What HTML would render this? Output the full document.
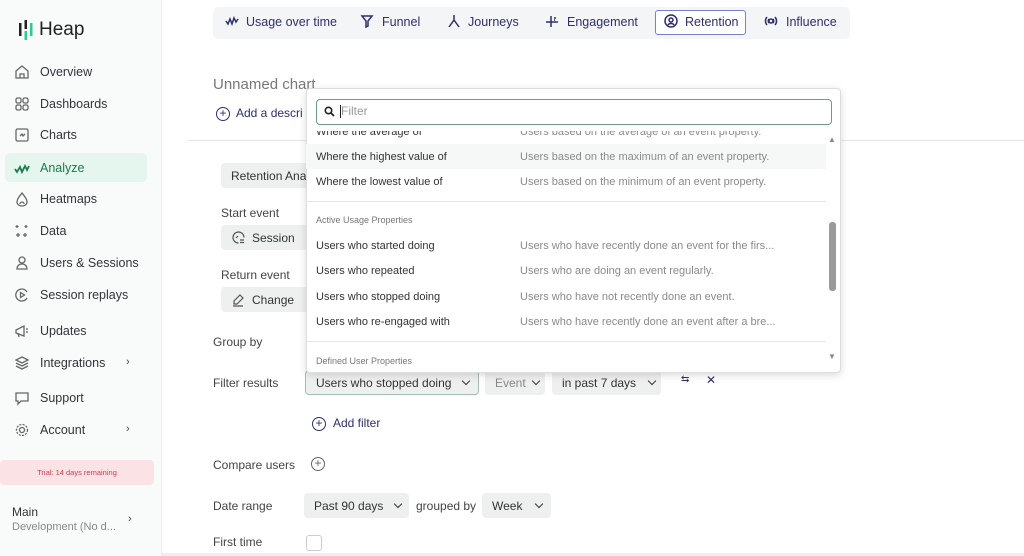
<!DOCTYPE html>
<html><head><meta charset="utf-8"><style>
*{box-sizing:border-box;margin:0;padding:0}
body{width:1024px;height:556px;overflow:hidden;font-family:"Liberation Sans",sans-serif;background:#fff;position:relative;color:#2f2f37}
.a{position:absolute;white-space:nowrap}
#sb{position:absolute;left:0;top:0;width:162px;height:556px;background:#f9fbfb;border-right:1px solid #eceeee}
.nav{position:absolute;left:14px;font-size:12.5px;color:#33333a;display:flex;align-items:center}
.nav svg{width:16px;height:16px;margin-right:10px;stroke:#666;fill:none;stroke-width:1.3}
.chev{position:absolute;left:126px;font-size:11px;color:#444}
.pill{position:absolute;background:#eeefef;border-radius:4px;font-size:12px;color:#333;display:flex;align-items:center;padding-left:10px}
.lbl{font-size:12px;color:#444}
.row{position:absolute;left:306px;width:520px;height:25px;font-size:11px;display:flex;align-items:center}
.row .l{position:absolute;left:10px;color:#333}
.row .r{position:absolute;left:214px;color:#8a8a8e}
.hd{position:absolute;left:316px;font-size:9px;color:#777}
.tab{position:absolute;top:15px;font-size:12.5px;color:#2d2f6e}
.ti{position:absolute;top:14px}
.ti svg{width:14px;height:14px;fill:none;stroke:#2d2f6e;stroke-width:1.5}
.cv{display:inline-block;width:6px;height:6px;border-right:1.6px solid #333;border-bottom:1.6px solid #333;transform:rotate(45deg);margin-top:-4px}
</style></head><body>
<div id="sb">
 <div class="a" style="left:18px;top:18px;">
  <svg width="16" height="24" viewBox="0 0 16 24"><rect x="1" y="5" width="2.5" height="13" fill="#222"/><rect x="6.5" y="2" width="2.5" height="9" fill="#222"/><rect x="6.5" y="13" width="2.5" height="9" fill="#2ecc87"/><rect x="12" y="5" width="2.5" height="13" fill="#2ecc87"/></svg>
 </div>
 <div class="a" style="left:39px;top:19px;font-size:19px;color:#222">Heap</div>
 <div class="nav" style="top:64px"><svg viewBox="0 0 16 16"><path d="M2 7l6-5 6 5v7H2z M6 14v-4h4v4"/></svg>Overview</div>
 <div class="nav" style="top:96px"><svg viewBox="0 0 16 16"><rect x="2" y="2" width="5" height="5" rx="1.5"/><rect x="9" y="2" width="5" height="5" rx="1.5"/><rect x="2" y="9" width="5" height="5" rx="1.5"/><rect x="9" y="9" width="5" height="5" rx="1.5"/></svg>Dashboards</div>
 <div class="nav" style="top:127px"><svg viewBox="0 0 16 16"><rect x="2" y="2" width="12" height="12" rx="1.5"/><path d="M6 9l2-2 1 2 2-2"/></svg>Charts</div>
 <div class="a" style="left:5px;top:153px;width:142px;height:29px;background:#e5f6ee;border-radius:5px"></div>
 <div class="nav" style="top:160px;color:#1f7a4d"><svg viewBox="0 0 16 16" style="stroke:#1f7a4d;stroke-width:1.8"><path d="M1 9l2 3 3-5 2 5 3-6 2 4 2-4"/></svg>Analyze</div>
 <div class="nav" style="top:191px"><svg viewBox="0 0 16 16"><path d="M8 2c-3 4-5 6-5 9a5 4 0 0 0 10 0c0-3-2-5-5-9z M6 13a2 2 0 0 1 4 0"/></svg>Heatmaps</div>
 <div class="nav" style="top:223px"><svg viewBox="0 0 16 16"><path d="M3 2v3M1.5 3.5h3M12 2v3M10.5 3.5h3M4 10v4M2 12h4M11 10v4M9 12h4"/></svg>Data</div>
 <div class="nav" style="top:255px"><svg viewBox="0 0 16 16"><circle cx="8" cy="5" r="3"/><path d="M3 14c0-3 2-5 5-5s5 2 5 5z"/></svg>Users &amp; Sessions</div>
 <div class="nav" style="top:287px"><svg viewBox="0 0 16 16"><path d="M13 5a6 6 0 1 0 0 6"/><path d="M6.5 5.5v5l4-2.5z"/></svg>Session replays</div>
 <div class="nav" style="top:323px"><svg viewBox="0 0 16 16"><path d="M2 7l8-4v10L2 10z M4 10l1 4M12 6h2M12 9h2"/></svg>Updates</div>
 <div class="nav" style="top:355px"><svg viewBox="0 0 16 16"><path d="M8 2l6 3-6 3-6-3z M2 8l6 3 6-3M2 11l6 3 6-3"/></svg>Integrations</div>
 <div class="chev" style="top:356px">›</div>
 <div class="nav" style="top:390px"><svg viewBox="0 0 16 16"><path d="M2 3h12v8H7l-3 3v-3H2z"/></svg>Support</div>
 <div class="nav" style="top:422px"><svg viewBox="0 0 16 16"><circle cx="8" cy="8" r="2.5"/><circle cx="8" cy="8" r="5.5" stroke-dasharray="2 1.3"/></svg>Account</div>
 <div class="chev" style="top:423px">›</div>
 <div class="a" style="left:0;top:460px;width:154px;height:25px;background:#fbe3e5;border-radius:4px;font-size:7.5px;color:#d23a4c;text-align:center;line-height:25px">Trial: 14 days remaining</div>
 <div class="a" style="left:12px;top:505px;font-size:12px;color:#333">Main</div>
 <div class="a" style="left:12px;top:521px;font-size:11px;color:#888">Development (No d...</div>
 <div class="chev" style="top:513px;left:128px">›</div>
</div>

<div class="a" style="left:213px;top:7px;width:637px;height:32px;background:#f4f5f6;border-radius:5px"></div>
<div class="a" style="left:655px;top:10px;width:91px;height:25px;border:1px solid #7a80c8;border-radius:3px;background:#fff"></div>
<div class="ti" style="left:225px"><svg viewBox="0 0 14 14"><path d="M1 7l2 3 2-5 2 5 2-6 2 4 2-3"/></svg></div>
<div class="tab" style="left:246px">Usage over time</div>
<div class="ti" style="left:360px"><svg viewBox="0 0 14 14"><path d="M2 2h10l-4 5v5l-2 1V7z"/></svg></div>
<div class="tab" style="left:382px">Funnel</div>
<div class="ti" style="left:447px"><svg viewBox="0 0 14 14"><path d="M7 1v5L2 13M7 6l5 7"/></svg></div>
<div class="tab" style="left:468px">Journeys</div>
<div class="ti" style="left:545px"><svg viewBox="0 0 14 14"><path d="M1 8h12M6 2v11M9 4h2M9 6h1"/></svg></div>
<div class="tab" style="left:567px">Engagement</div>
<div class="ti" style="left:664px"><svg viewBox="0 0 14 14"><circle cx="7" cy="7" r="6"/><circle cx="7" cy="6" r="2"/><path d="M4 11c1-2 5-2 6 0"/></svg></div>
<div class="tab" style="left:685px">Retention</div>
<div class="ti" style="left:764px"><svg viewBox="0 0 14 14"><circle cx="7" cy="7" r="2"/><path d="M3 3a6 6 0 0 0 0 8M11 3a6 6 0 0 1 0 8M5 5a3 3 0 0 0 0 4M9 5a3 3 0 0 1 0 4"/></svg></div>
<div class="tab" style="left:786px">Influence</div>

<div class="a" style="left:213px;top:76px;font-size:15px;color:#777">Unnamed chart</div>
<div class="a" style="left:216px;top:106px;font-size:12px;color:#2d2f6e"><span style="display:inline-block;width:14px;height:14px;border:1.3px solid #2d2f6e;border-radius:50%;text-align:center;line-height:11px;font-size:12px;margin-right:6px">+</span>Add a descri</div>
<div class="a" style="left:188px;top:140px;width:836px;height:1px;background:#e6e6e6"></div>

<div class="pill" style="left:221px;top:163px;width:90px;height:25px">Retention Anal</div>
<div class="a lbl" style="left:221px;top:206px">Start event</div>
<div class="pill" style="left:221px;top:225px;width:90px;height:25px"><svg width="15" height="15" viewBox="0 0 15 15" style="fill:none;stroke:#555;stroke-width:1.2;margin-right:6px"><path d="M13 7.5a5.5 5.5 0 1 0-5.5 5.5"/><path d="M5 8l2-2M9 10h4M9 12.5h4"/></svg>Session</div>
<div class="a lbl" style="left:221px;top:268px">Return event</div>
<div class="pill" style="left:221px;top:287px;width:90px;height:25px"><svg width="14" height="14" viewBox="0 0 14 14" style="fill:none;stroke:#555;stroke-width:1.2;margin-right:7px"><path d="M9 2l3 3-6 6H3V8z M2 13h10"/></svg>Change</div>
<div class="a lbl" style="left:213px;top:335px">Group by</div>
<div class="a lbl" style="left:213px;top:376px">Filter results</div>
<div class="pill" style="left:305px;top:370px;width:174px;height:25px;border:1.5px solid #9fc0ae;color:#333">Users who stopped doing<span class="cv" style="margin-left:12px"></span></div>
<div class="pill" style="left:485px;top:370px;width:60px;height:25px;color:#888">Event<span class="cv" style="margin-left:7px"></span></div>
<div class="pill" style="left:552px;top:370px;width:109px;height:25px">in past 7 days<span class="cv" style="margin-left:13px"></span></div>
<div class="a" style="left:681px;top:374px;font-size:10px;color:#2d2f6e">⇆</div>
<div class="a" style="left:706px;top:373px;font-size:12px;color:#2d2f6e">✕</div>
<div class="a" style="left:312px;top:416px;font-size:12px;color:#2d2f6e"><span style="display:inline-block;width:14px;height:14px;border:1.3px solid #2d2f6e;border-radius:50%;text-align:center;line-height:11px;font-size:12px;margin-right:7px">+</span>Add filter</div>
<div class="a lbl" style="left:213px;top:458px">Compare users</div>
<div class="a" style="left:311px;top:457px;width:14px;height:14px;border:1.2px solid #666;border-radius:50%;text-align:center;line-height:11px;font-size:12px;color:#666">+</div>
<div class="a lbl" style="left:213px;top:499px">Date range</div>
<div class="pill" style="left:304px;top:493px;width:105px;height:25px">Past 90 days<span class="cv" style="margin-left:12px"></span></div>
<div class="a lbl" style="left:416px;top:499px">grouped by</div>
<div class="pill" style="left:482px;top:493px;width:69px;height:25px">Week<span class="cv" style="margin-left:14px"></span></div>
<div class="a lbl" style="left:213px;top:535px">First time</div>
<div class="a" style="left:306px;top:535px;width:16px;height:16px;border:1px solid #ccc;border-radius:3px"></div>
<div class="a" style="left:162px;top:553px;width:862px;height:3px;background:#eee"></div>

<!-- dropdown -->
<div class="a" style="left:306px;top:88px;width:535px;height:285px;background:#fff;border:1px solid #ddd;border-radius:4px;box-shadow:0 2px 8px rgba(0,0,0,.15);overflow:hidden">
 <div class="a" style="left:9px;top:10px;width:516px;height:26px;border:1.5px solid #6c9a82;border-radius:4px;font-size:12px;color:#999;padding-left:24px;line-height:23px">Filter
  <svg style="position:absolute;left:7px;top:6px" width="11" height="11" viewBox="0 0 11 11"><circle cx="4.5" cy="4.5" r="3.2" fill="none" stroke="#222" stroke-width="1.6"/><path d="M7 7l3 3" stroke="#222" stroke-width="1.8"/></svg>
  <span style="position:absolute;left:23px;top:5px;width:1px;height:13px;background:#222"></span></div>
</div>
<div class="row" style="top:119px;clip-path:inset(12px 0 0 0)"><span class="l">Where the average of</span><span class="r">Users based on the average of an event property.</span></div>
<div class="row" style="top:144px;background:#f6f7f7"><span class="l">Where the highest value of</span><span class="r">Users based on the maximum of an event property.</span></div>
<div class="row" style="top:169px"><span class="l">Where the lowest value of</span><span class="r">Users based on the minimum of an event property.</span></div>
<div class="a" style="left:306px;top:201px;width:520px;height:1px;background:#e6e6e6"></div>
<div class="hd" style="top:215px">Active Usage Properties</div>
<div class="row" style="top:233px"><span class="l">Users who started doing</span><span class="r">Users who have recently done an event for the firs...</span></div>
<div class="row" style="top:258px"><span class="l">Users who repeated</span><span class="r">Users who are doing an event regularly.</span></div>
<div class="row" style="top:284px"><span class="l">Users who stopped doing</span><span class="r">Users who have not recently done an event.</span></div>
<div class="row" style="top:309px"><span class="l">Users who re-engaged with</span><span class="r">Users who have recently done an event after a bre...</span></div>
<div class="a" style="left:306px;top:341px;width:520px;height:1px;background:#e6e6e6"></div>
<div class="hd" style="top:356px">Defined User Properties</div>
<div class="a" style="left:829px;top:222px;width:7px;height:69px;background:#9a9a9a;border-radius:3px"></div>
<div class="a" style="left:828px;top:135px;font-size:8px;color:#888">▲</div>
<div class="a" style="left:828px;top:352px;font-size:8px;color:#888">▼</div>
</body></html>
